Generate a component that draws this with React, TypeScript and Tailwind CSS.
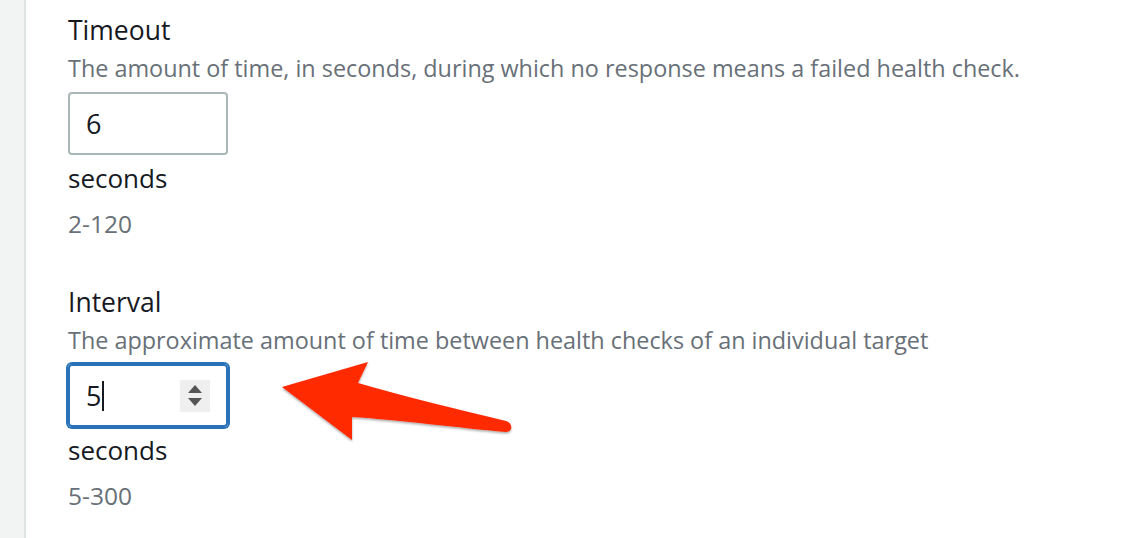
import React from "react";

function Field({
  label,
  desc,
  value,
  range,
  focused,
}: {
  label: string;
  desc: string;
  value: string;
  range: string;
  focused?: boolean;
}) {
  return (
    <div className="flex flex-col">
      <div className="text-[26.5px] leading-[34px] text-[#16191f]">{label}</div>
      <div className="text-[23.4px] leading-[32px] text-[#687078] mt-[5px]">{desc}</div>
      <div className="mt-[8px]">
        {focused ? (
          <div className="w-[160px] h-[63px] rounded-[4px] border-2 border-[#2a72b8] ring-2 ring-[#2a72b8] flex items-center pl-[16px] pr-[16px] box-border">
            <span className="text-[27px] leading-none text-[#16191f]">{value}</span>
            <span className="w-[2px] h-[30px] bg-[#16191f] ml-[1px]" />
            <div className="ml-auto w-[30px] h-[32px] bg-[#efefef] flex flex-col items-center justify-center gap-[5px]">
              <svg width="14" height="8" viewBox="0 0 14 8">
                <path d="M7 0 L14 8 L0 8 Z" fill="#555" />
              </svg>
              <svg width="14" height="8" viewBox="0 0 14 8">
                <path d="M0 0 L14 0 L7 8 Z" fill="#555" />
              </svg>
            </div>
          </div>
        ) : (
          <div className="w-[160px] h-[63px] rounded-[4px] border-2 border-[#aab7b8] flex items-center pl-[16px] box-border">
            <span className="text-[27px] leading-none text-[#16191f]">{value}</span>
          </div>
        )}
      </div>
      <div className="text-[26px] leading-[34px] text-[#16191f] mt-[6px]">seconds</div>
      <div className="text-[24.5px] leading-[32px] text-[#687078] mt-[13px]">{range}</div>
    </div>
  );
}

export default function App() {
  return (
    <div
      className="relative w-[1148px] h-[538px] bg-white flex overflow-hidden"
      style={{ fontFamily: '"Open Sans", "Noto Sans", sans-serif' }}
    >
      <div className="w-[26px] bg-[#f2f3f3] border-r-2 border-[#e1e4e4] shrink-0" />
      <div className="flex-1 bg-white pl-[42px] pt-[13px] flex flex-col gap-[45px]">
        <Field
          label="Timeout"
          desc="The amount of time, in seconds, during which no response means a failed health check."
          value="6"
          range="2-120"
        />
        <Field
          label="Interval"
          desc="The approximate amount of time between health checks of an individual target"
          value="5"
          range="5-300"
          focused
        />
      </div>
      <svg
        className="absolute left-[276px] top-[356px]"
        width="240"
        height="90"
        viewBox="276 356 240 90"
      >
        <defs>
          <filter id="sh" x="-10%" y="-10%" width="120%" height="130%">
            <feDropShadow dx="0" dy="1.5" stdDeviation="1.2" floodColor="#000" floodOpacity="0.35" />
          </filter>
        </defs>
        <path
          d="M282 387 L368 362 L358 383 C 410 398, 460 410, 506 421 C 513 423, 513 432, 506 432 C 460 428, 400 420, 352 417 L352 440 Z"
          fill="#ff2a00"
          filter="url(#sh)"
        />
      </svg>
    </div>
  );
}
